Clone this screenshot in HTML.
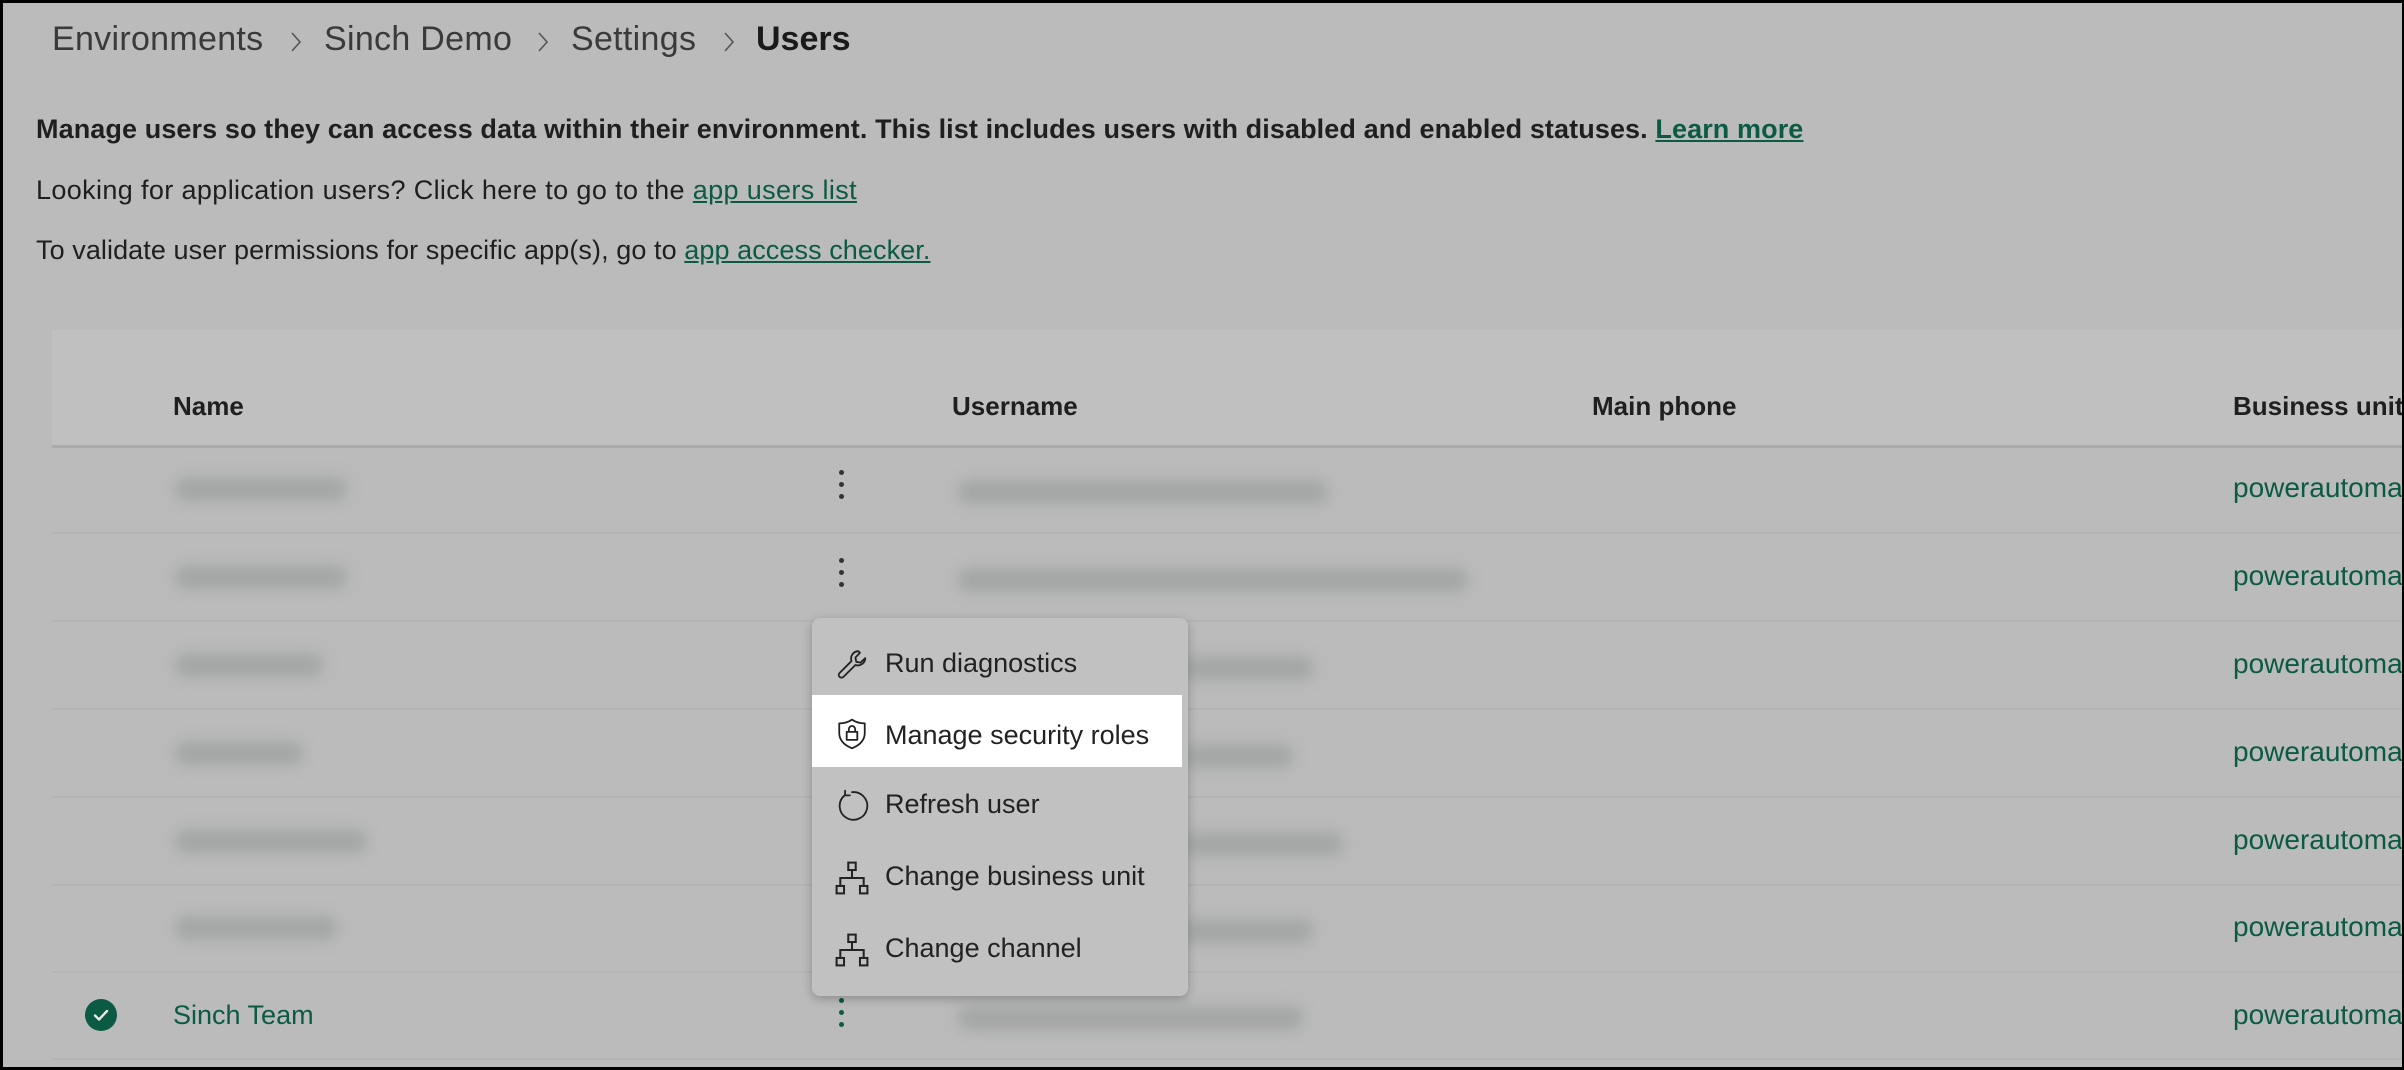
<!DOCTYPE html>
<html><head><meta charset="utf-8"><style>
*{margin:0;padding:0;box-sizing:border-box}
html,body{width:2404px;height:1070px;overflow:hidden}
body{background:#000;font-family:"Liberation Sans",sans-serif;color:#1f1f1f;position:relative}
#pg{position:absolute;left:3px;top:3px;width:2399px;height:1064px;background:#bbbbbb;overflow:hidden}
.abs{position:absolute;white-space:nowrap}
.crumb{top:17px;font-size:34px;color:#3a3a3a}
.chev{position:absolute;top:28px}
a{color:#0b5a44;text-decoration:underline}
.hdr{position:absolute;left:49px;top:327px;width:2360px;height:118px;background:#c0c0c0;border-bottom:3px solid #aaaaaa}
.th{top:388px;font-size:26px;font-weight:bold;color:#1f1f1f}
.sep{position:absolute;height:2px;background:#b4b4b4;left:49px;width:2360px}
.blur{position:absolute;height:24px;background:#a3a6a5;border-radius:10px;filter:blur(7px)}
.keb{position:absolute;left:836px;width:6px}
.keb i{display:block;width:5px;height:5px;border-radius:50%;background:#333;margin-bottom:7px}
.bu{left:2230px;font-size:28px;color:#0b5a44}
#menu{position:absolute;left:809px;top:615px;width:376px;height:378px;background:#c1c1c1;border-radius:8px;box-shadow:0 3px 10px rgba(0,0,0,.25)}
.mi{position:absolute;left:0;width:370px;height:72px}
.mi svg{position:absolute;left:23px;top:19px}
.mi span{position:absolute;left:73px;top:19px;font-size:27px;color:#222}
</style></head><body><div id="pg">
<div class="abs crumb" style="left:49px;letter-spacing:0.3px">Environments</div>
<svg class="chev" style="left:287px" width="12" height="22" viewBox="0 0 12 22"><path d="M2 2l8 9-8 9" fill="none" stroke="#555" stroke-width="1.6"/></svg>
<div class="abs crumb" style="left:321px;letter-spacing:0.3px">Sinch Demo</div>
<svg class="chev" style="left:534px" width="12" height="22" viewBox="0 0 12 22"><path d="M2 2l8 9-8 9" fill="none" stroke="#555" stroke-width="1.6"/></svg>
<div class="abs crumb" style="left:568px;letter-spacing:0.3px">Settings</div>
<svg class="chev" style="left:720px" width="12" height="22" viewBox="0 0 12 22"><path d="M2 2l8 9-8 9" fill="none" stroke="#555" stroke-width="1.6"/></svg>
<div class="abs crumb" style="left:753px;font-weight:bold;color:#1a1a1a">Users</div>

<div class="abs" style="left:33px;top:111px;font-size:27px;font-weight:bold;letter-spacing:0.1px">Manage users so they can access data within their environment. This list includes users with disabled and enabled statuses. <a>Learn more</a></div>
<div class="abs" style="left:33px;top:172px;font-size:27px;letter-spacing:0.37px">Looking for application users? Click here to go to the <a>app users list</a></div>
<div class="abs" style="left:33px;top:232px;font-size:27px;letter-spacing:0.08px">To validate user permissions for specific app(s), go to <a>app access checker.</a></div>

<div class="hdr"></div>
<div class="abs th" style="left:170px">Name</div>
<div class="abs th" style="left:949px">Username</div>
<div class="abs th" style="left:1589px">Main phone</div>
<div class="abs th" style="left:2230px">Business unit</div>

<div class="sep" style="top:529px"></div>
<div class="sep" style="top:617px"></div>
<div class="sep" style="top:705px"></div>
<div class="sep" style="top:793px"></div>
<div class="sep" style="top:881px"></div>
<div class="sep" style="top:968px"></div>
<div class="sep" style="top:1055px"></div>

<div class="blur" style="left:172px;top:474px;width:172px"></div>
<div class="blur" style="left:172px;top:562px;width:172px"></div>
<div class="blur" style="left:172px;top:650px;width:148px"></div>
<div class="blur" style="left:172px;top:738px;width:128px"></div>
<div class="blur" style="left:172px;top:826px;width:192px"></div>
<div class="blur" style="left:172px;top:913px;width:162px"></div>
<div class="blur" style="left:955px;top:477px;width:370px"></div>
<div class="blur" style="left:955px;top:565px;width:510px"></div>
<div class="blur" style="left:1180px;top:653px;width:130px"></div>
<div class="blur" style="left:1180px;top:741px;width:110px"></div>
<div class="blur" style="left:1180px;top:829px;width:160px"></div>
<div class="blur" style="left:1180px;top:916px;width:130px"></div>
<div class="blur" style="left:955px;top:1003px;width:345px"></div>

<div class="keb" style="top:467px"><i></i><i></i><i></i></div>
<div class="keb" style="top:555px"><i></i><i></i><i></i></div>
<div class="keb" style="top:995px"><i style="background:#0b5a44"></i><i style="background:#0b5a44"></i><i style="background:#0b5a44"></i></div>

<svg class="abs" style="left:81px;top:995px" width="34" height="34" viewBox="0 0 34 34"><circle cx="17" cy="17" r="16" fill="#0b5a44"/><path d="M11 17.5l4 4 8-8.5" fill="none" stroke="#e8e8e8" stroke-width="2.4" stroke-linecap="round" stroke-linejoin="round"/></svg>
<div class="abs" style="left:170px;top:997px;font-size:27px;color:#0b5a44">Sinch Team</div>

<div class="abs bu" style="top:469px">powerautoma</div>
<div class="abs bu" style="top:557px">powerautoma</div>
<div class="abs bu" style="top:645px">powerautoma</div>
<div class="abs bu" style="top:733px">powerautoma</div>
<div class="abs bu" style="top:821px">powerautoma</div>
<div class="abs bu" style="top:908px">powerautoma</div>
<div class="abs bu" style="top:996px">powerautoma</div>

<div id="menu">
 <div class="mi" style="top:11px"><svg width="34" height="34" viewBox="0 0 32 32" fill="none" stroke="#222" stroke-width="1.7" stroke-linejoin="round"><path d="M22 3a7 7 0 0 0-6.5 9.3L4.3 23.5a2.6 2.6 0 0 0 3.7 3.7l11.2-11.2A7 7 0 0 0 28.5 9.5l-4.5 4.3-4-0.8-0.8-4 4.3-4.5A7 7 0 0 0 22 3z"/></svg><span>Run diagnostics</span></div>
 <div class="mi" style="top:77px;background:#fff"><svg width="34" height="34" viewBox="0 0 32 32" style="top:22px" fill="none" stroke="#222" stroke-width="1.7" stroke-linejoin="round"><path d="M16 2.5c-3.5 2.5-7.5 3.5-12 3.5v9c0 7 5 11.5 12 14.5 7-3 12-7.5 12-14.5V6c-4.5 0-8.5-1-12-3.5z"/><rect x="11" y="14" width="10" height="7.5"/><path d="M13 14v-2.5a3 3 0 0 1 6 0V14"/></svg><span style="top:25px">Manage security roles</span></div>
 <div class="mi" style="top:152px"><svg width="34" height="34" viewBox="0 0 32 32" fill="none" stroke="#222" stroke-width="1.7" stroke-linecap="round" stroke-linejoin="round"><path d="M9 6A13 13 0 1 0 16 3"/><path d="M9.5 1.5v4.5h4.5"/></svg><span>Refresh user</span></div>
 <div class="mi" style="top:224px"><svg width="34" height="34" viewBox="0 0 32 32" fill="none" stroke="#222" stroke-width="1.9"><rect x="12.5" y="1.5" width="7" height="7"/><rect x="1.5" y="23.5" width="7" height="7"/><rect x="23.5" y="23.5" width="7" height="7"/><path d="M16 8.5v7.5M5 23.5V16h22v7.5"/></svg><span>Change business unit</span></div>
 <div class="mi" style="top:296px"><svg width="34" height="34" viewBox="0 0 32 32" fill="none" stroke="#222" stroke-width="1.9"><rect x="12.5" y="1.5" width="7" height="7"/><rect x="1.5" y="23.5" width="7" height="7"/><rect x="23.5" y="23.5" width="7" height="7"/><path d="M16 8.5v7.5M5 23.5V16h22v7.5"/></svg><span>Change channel</span></div>
</div>
</div></body></html>
